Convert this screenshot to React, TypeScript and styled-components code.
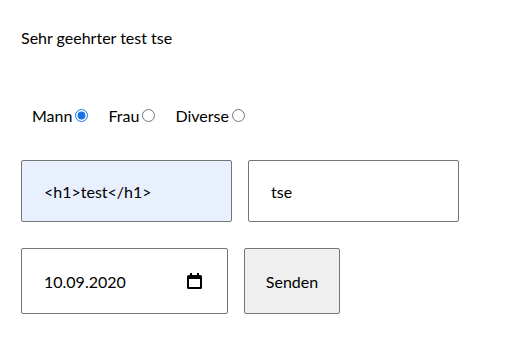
import styled, { createGlobalStyle } from 'styled-components';

const GlobalStyle = createGlobalStyle`
  body {
    margin: 0;
    background: #fff;
    font-family: Lato, "Open Sans", sans-serif;
    color: #000;
  }
`;

function CalendarIcon() {
  return (
    <svg width="15" height="16" viewBox="0 0 15 16" aria-hidden="true">
      <rect x="3" y="0" width="2" height="3" fill="#000" />
      <rect x="10" y="0" width="2" height="3" fill="#000" />
      <path
        fillRule="evenodd"
        fill="#000"
        d="M1.5 2h12A1.5 1.5 0 0 1 15 3.5v11a1.5 1.5 0 0 1-1.5 1.5h-12A1.5 1.5 0 0 1 0 14.5v-11A1.5 1.5 0 0 1 1.5 2zM2 6v8h11V6z"
      />
    </svg>
  );
}

function App() {
  return (
    <>
      <GlobalStyle />
      <Form onSubmit={(e) => e.preventDefault()}>
        <Greeting>Sehr geehrter test tse</Greeting>

        <RadioRow>
          <RadioLabel>
            Mann <input type="radio" name="gender" defaultChecked />
          </RadioLabel>
          <RadioLabel>
            Frau <input type="radio" name="gender" />
          </RadioLabel>
          <RadioLabel>
            Diverse <input type="radio" name="gender" />
          </RadioLabel>
        </RadioRow>

        <FieldRow>
          <TextField $autofilled defaultValue="<h1>test</h1>" />
          <TextField defaultValue="tse" />
        </FieldRow>

        <FieldRow>
          <DateField>
            <DateInput defaultValue="10.09.2020" />
            <CalendarIcon />
          </DateField>
          <SubmitButton type="submit">Senden</SubmitButton>
        </FieldRow>
      </Form>
    </>
  );
}

const Form = styled.form`
  display: flex;
  flex-direction: column;
  padding: 28px 21px 0;
`;

const Greeting = styled.p`
  margin: 0;
  font-size: 16px;
  line-height: 19px;
`;

const RadioRow = styled.div`
  display: flex;
  align-items: center;
  gap: 20px;
  margin-top: 59px;
  padding-left: 11px;
`;

const RadioLabel = styled.label`
  display: flex;
  align-items: center;
  font-size: 16px;
  line-height: 19px;

  input {
    width: 13px;
    height: 13px;
    margin: 0 0 0 3px;
    accent-color: #1a73e8;
  }
`;

const FieldRow = styled.div`
  display: flex;
  gap: 16px;
  margin-top: 26px;

  &:nth-of-type(2) {
    margin-top: 35px;
  }
`;

const TextField = styled.input<{ $autofilled?: boolean }>`
  box-sizing: border-box;
  width: 211px;
  height: 62px;
  padding: 0 22px;
  border: 1px solid #767676;
  border-radius: 2px;
  background: ${(p) => (p.$autofilled ? '#e8f0fe' : '#fff')};
  font-family: Lato, sans-serif;
  font-size: 16px;
  color: #000;
  outline: none;
`;

const DateField = styled.div`
  box-sizing: border-box;
  display: flex;
  align-items: center;
  width: 207px;
  height: 66px;
  padding: 0 25px 0 22px;
  border: 1px solid #767676;
  border-radius: 2px;
  background: #fff;
`;

const DateInput = styled.input`
  flex: 1;
  min-width: 0;
  padding: 0;
  border: none;
  background: transparent;
  font-family: Lato, sans-serif;
  font-size: 16px;
  color: #000;
  outline: none;
`;

const SubmitButton = styled.button`
  width: 96px;
  height: 66px;
  border: 1px solid #767676;
  border-radius: 2px;
  background: #efefef;
  font-family: Lato, sans-serif;
  font-size: 16px;
  color: #000;
`;

export default App;
